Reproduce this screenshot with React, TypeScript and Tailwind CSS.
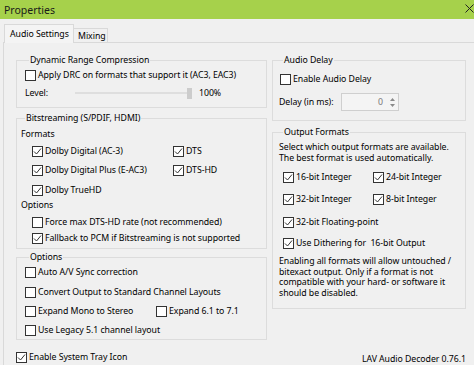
import { FC, ReactNode } from "react";

// checkbox drawn like the Windows 10 one
const Check: FC<{ checked?: boolean; label: string; className?: string }> = ({
  checked,
  label,
  className = "",
}) => (
  <div className={`flex items-center h-[12px] whitespace-nowrap ${className}`}>
    <span className="w-[11px] h-[11px] shrink-0 border border-[#333333] bg-white flex items-center justify-center">
      {checked && (
        <svg width="9" height="9" viewBox="0 0 9 9">
          <polyline points="1,4.5 3.5,7 8,1.5" fill="none" stroke="#333333" strokeWidth="1" />
        </svg>
      )}
    </span>
    <span className="ml-[2px]">{label}</span>
  </div>
);

// group box
const Group: FC<{ title: string; className?: string; children: ReactNode }> = ({
  title,
  className = "",
  children,
}) => (
  <fieldset className={`border border-[#dcdcdc] ${className}`}>
    <legend className="ml-[4px] px-[1px] leading-[12px]">{title}</legend>
    {children}
  </fieldset>
);

export default function App() {
  return (
    <div className="w-[474px] h-[365px] overflow-hidden bg-[#f0f0f0] text-[8.75px] tracking-[-0.05px] leading-[12px] text-black font-['Noto_Sans',sans-serif]">
      {/* title bar */}
      <div className="h-[19px] bg-[#a6d14b] flex items-center justify-between pl-[4px]">
        <span className="text-[10.5px] tracking-normal text-[#1a1a1a]">Properties</span>
        <svg width="9" height="9" viewBox="0 0 9 9" className="mb-[3px]">
          <path d="M0.5 0.5 L8.5 8.5 M8.5 0.5 L0.5 8.5" stroke="#222" strokeWidth="1" />
        </svg>
      </div>

      {/* tabs */}
      <div className="h-[23px] flex items-end pl-[4px] whitespace-nowrap">
        <div className="relative z-10 -mb-px h-[19px] w-[70px] border-l border-t border-r border-[#d9d9d9] bg-[#f4f4f4] pl-[5px] pt-[3px]">
          Audio Settings
        </div>
        <div className="h-[14px] w-[34px] border-t border-r border-[#d9d9d9] pl-[4px] pt-[1px]">Mixing</div>
      </div>

      {/* tab page */}
      <div className="ml-[3px] w-[520px] h-[330px] border-l border-t border-[#d9d9d9] pl-[12px] pt-[11px]">
        <div className="flex items-start gap-[5px]">
          {/* left column */}
          <div className="w-[251px] flex flex-col">
            <Group title="Dynamic Range Compression" className="h-[54px] pl-[8px]">
              <Check className="mt-[3px]" label="Apply DRC on formats that support it (AC3, EAC3)" />
              <div className="flex items-center h-[12px] mt-[6px]">
                <span className="w-[50px]">Level:</span>
                <div className="w-[112px] h-[2px] bg-[#dedede]" />
                <div className="w-[5px] h-[11px] bg-[#cccccc]" />
                <span className="ml-[7px]">100%</span>
              </div>
            </Group>

            <Group title="Bitstreaming (S/PDIF, HDMI)" className="h-[137px] mt-[4px] pl-[4px]">
              <div className="mt-[4px]">Formats</div>
              <div className="pl-[11px]">
                <div className="flex mt-[5px]">
                  <Check className="w-[141px]" checked label="Dolby Digital (AC-3)" />
                  <Check checked label="DTS" />
                </div>
                <div className="flex mt-[7px]">
                  <Check className="w-[141px]" checked label="Dolby Digital Plus (E-AC3)" />
                  <Check checked label="DTS-HD" />
                </div>
                <Check className="mt-[8px]" checked label="Dolby TrueHD" />
              </div>
              <div className="mt-[3px]">Options</div>
              <div className="pl-[11px]">
                <Check className="mt-[5px]" label="Force max DTS-HD rate (not recommended)" />
                <Check className="mt-[4px]" checked label="Fallback to PCM if Bitstreaming is not supported" />
              </div>
            </Group>

            <Group title="Options" className="h-[89px] mt-[2px] pl-[8px]">
              <Check className="mt-[3px]" label="Auto A/V Sync correction" />
              <Check className="mt-[8px]" label="Convert Output to Standard Channel Layouts" />
              <div className="flex mt-[7px]">
                <Check className="w-[131px]" label="Expand Mono to Stereo" />
                <Check label="Expand 6.1 to 7.1" />
              </div>
              <Check className="mt-[7px]" label="Use Legacy 5.1 channel layout" />
            </Group>
          </div>

          {/* right column */}
          <div className="w-[194px] flex flex-col">
            <Group title="Audio Delay" className="h-[67px] pl-[6px]">
              <Check className="mt-[7px] ml-[1px]" label="Enable Audio Delay" />
              <div className="flex items-center mt-[8px]">
                <span className="w-[62px]">Delay (in ms):</span>
                <div className="w-[58px] h-[18px] border border-[#cfcfcf] bg-[#f4f4f4] flex items-center">
                  <span className="flex-1 text-right pr-[4px] text-[#7a7a7a]">0</span>
                  <div className="w-[11px] h-full flex flex-col items-center justify-center gap-[3px]">
                    <svg width="5" height="3" viewBox="0 0 5 3">
                      <path d="M0 3 L2.5 0 L5 3 Z" fill="#8a8a8a" />
                    </svg>
                    <svg width="5" height="3" viewBox="0 0 5 3">
                      <path d="M0 0 L5 0 L2.5 3 Z" fill="#8a8a8a" />
                    </svg>
                  </div>
                </div>
              </div>
            </Group>

            <Group title="Output Formats" className="h-[183px] mt-[5px] pl-[6px]">
              <p className="mt-[4px] leading-[10.5px] whitespace-nowrap">
                Select which output formats are available.
                <br />
                The best format is used automatically.
              </p>
              <div className="pl-[4px]">
                <div className="flex mt-[8px]">
                  <Check className="w-[90px]" checked label="16-bit Integer" />
                  <Check checked label="24-bit Integer" />
                </div>
                <div className="flex mt-[10px]">
                  <Check className="w-[90px]" checked label="32-bit Integer" />
                  <Check checked label="8-bit Integer" />
                </div>
                <Check className="mt-[11px]" checked label="32-bit Floating-point" />
                <Check className="mt-[9px]" checked label={"Use Dithering for\u00a0 16-bit Output"} />
              </div>
              <p className="mt-[7px] leading-[10.5px] whitespace-nowrap">
                Enabling all formats will allow untouched /
                <br />
                bitexact output. Only if a format is not
                <br />
                compatible with your hard- or software it
                <br />
                should be disabled.
              </p>
            </Group>
          </div>
        </div>

        {/* footer */}
        <div className="w-[450px] flex items-center justify-between mt-[9px]">
          <Check checked label="Enable System Tray Icon" />
          <span className="mt-[4px]">LAV Audio Decoder 0.76.1</span>
        </div>
      </div>
    </div>
  );
}
